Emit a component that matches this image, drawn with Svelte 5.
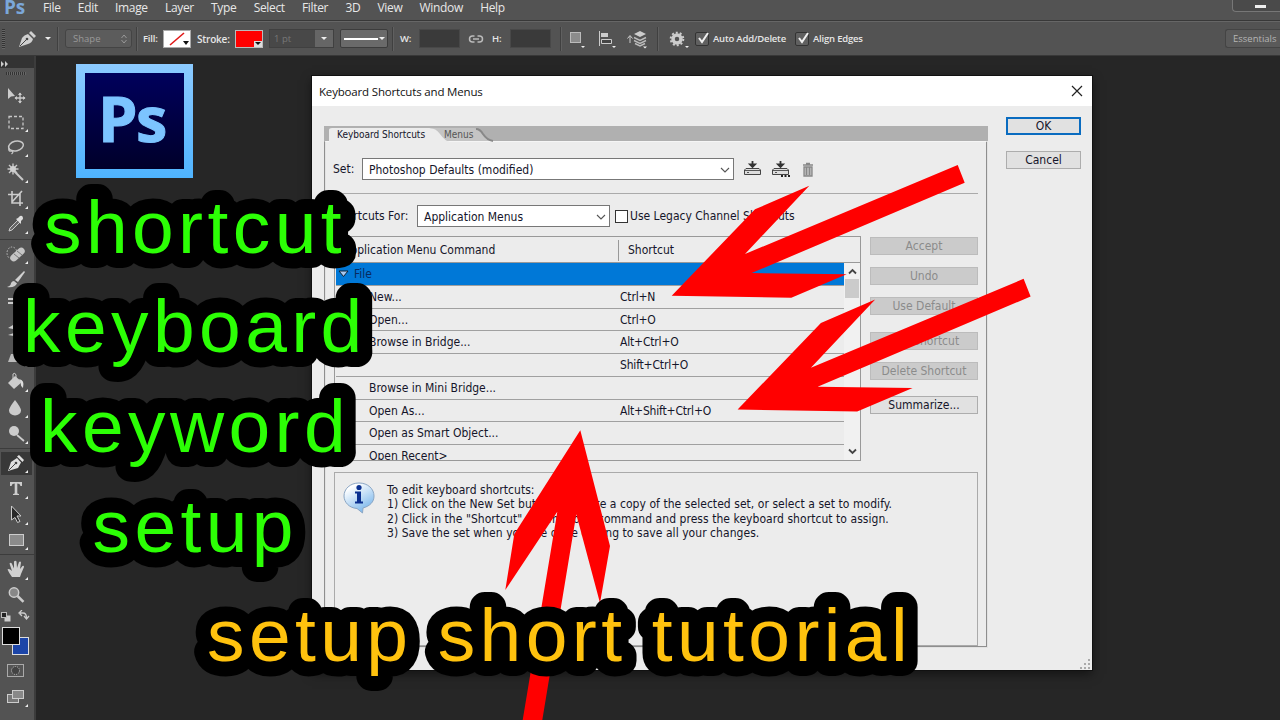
<script lang="ts">
    const menus = ["File", "Edit", "Image", "Layer", "Type", "Select", "Filter", "3D", "View", "Window", "Help"];

    const toolGroups: string[][] = [
        ["move", "marquee", "lasso", "wand", "crop", "eyedropper"],
        ["heal", "brush", "stamp", "history", "eraser", "bucket", "blur", "dodge"],
        ["pen", "type", "select", "shape"],
        ["hand", "zoom"],
    ];

    const noCorner = ["move", "zoom"];

    const rows = [
        { name: "New...", keys: "Ctrl+N" },
        { name: "Open...", keys: "Ctrl+O" },
        { name: "Browse in Bridge...", keys: "Alt+Ctrl+O" },
        { name: "", keys: "Shift+Ctrl+O" },
        { name: "Browse in Mini Bridge...", keys: "" },
        { name: "Open As...", keys: "Alt+Shift+Ctrl+O" },
        { name: "Open as Smart Object...", keys: "" },
        { name: "Open Recent>", keys: "" },
    ];

    const actions = [
        { label: "Accept", disabled: true },
        { label: "Undo", disabled: true },
        { label: "Use Default", disabled: true },
        { label: "Add Shortcut", disabled: true, group: true },
        { label: "Delete Shortcut", disabled: true },
        { label: "Summarize...", disabled: false, group: true },
    ];

    const captions = [
        { text: "shortcut", x: 44, y: 253, color: "#2cff05" },
        { text: "keyboard", x: 23, y: 352, color: "#2cff05" },
        { text: "keyword", x: 40, y: 452, color: "#2cff05" },
        { text: "setup", x: 92.5, y: 552, color: "#2cff05" },
        { text: "setup short tutorial", x: 207, y: 661, color: "#ffc20e" },
    ];

    let legacy = false;
</script>

<main>
    <header class="menubar">
        <span class="brand">Ps</span>
        <nav>
            {#each menus as item}
                <span>{item}</span>
            {/each}
        </nav>
        <span class="minimize"></span>
    </header>

    <section class="options">
        <span class="grip"></span>
        <svg class="pen-icon" width="20" height="20" viewBox="0 0 20 20">
            <path d="M1 18 L4 9 Q6 6 10 5 L15 10 Q14 14 10 15 Z" fill="#d0d0d0" />
            <path d="M11 4 L13 2 L18 7 L16 9 Z" fill="#d0d0d0" />
            <path d="M2 17 L8.500 10.500" stroke="#444" />
            <circle cx="9" cy="10" r="1.300" fill="#444" />
        </svg>
        <i class="caret"></i>
        <span class="sep s1"></span>
        <span class="combo">Shape
            <svg width="6" height="10" viewBox="0 0 6 10"><path d="M.5 4 L3 1 L5.500 4 M.5 6 L3 9 L5.500 6" fill="none" stroke="#999" /></svg>
        </span>
        <span class="sep s2"></span>
        <b class="fill-label">Fill:</b>
        <svg class="swatch" width="28" height="18" viewBox="0 0 28 18">
            <rect x=".5" y=".5" width="27" height="17" fill="#fff" stroke="#aaa" />
            <path d="M7 15 L21 3" stroke="#e01818" stroke-width="1.6" />
            <path d="M20 11 H26 L23 15 Z" fill="#111" />
        </svg>
        <b class="stroke-label">Stroke:</b>
        <svg class="swatch" width="28" height="18" viewBox="0 0 28 18">
            <rect x=".5" y=".5" width="27" height="17" fill="#f00" stroke="#bbb" />
            <path d="M19 17 V11 H27 V17 Z" fill="#ddd" />
            <path d="M20 12 H26 L23 15 Z" fill="#111" />
        </svg>
        <span class="width-field"><span>1 pt</span><em><i class="caret"></i></em></span>
        <span class="line-style"><i class="line"></i><i class="caret"></i></span>
        <span class="sep s3"></span>
        <b class="w-label">W:</b>
        <span class="size-field"></span>
        <svg class="link" width="16" height="10" viewBox="0 0 16 10">
            <path d="M6.500 2 H4.500 A3 3 0 0 0 4.500 8 H6.500 M9.500 2 H11.500 A3 3 0 0 1 11.500 8 H9.500 M5 5 H11" fill="none" stroke="#bbb" stroke-width="1.5" />
        </svg>
        <b class="h-label">H:</b>
        <span class="size-field"></span>
        <span class="sep s4"></span>
        <svg class="path-icons" width="82" height="22" viewBox="0 0 82 22">
            <rect x="1.500" y="4.500" width="10" height="10" fill="#8c8c8c" stroke="#bbb" />
            <path d="M30.500 3 V18" stroke="#ccc" />
            <path d="M32 5 h7 v4 h-7 z" fill="#ccc" />
            <path d="M32.500 11.500 h10 v4 h-10 z" fill="#444" stroke="#ccc" />
            <path d="M61 15 V8 M58.500 10.500 L61 7.500 L63.500 10.500" fill="none" stroke="#ccc" />
            <path d="M71 3 L77 6 L71 9 L65 6 Z" fill="#ccc" />
            <path d="M65 9.500 L71 12.500 L77 9.500 M65 12.500 L71 15.500 L77 12.500 M66 15.500 L71 18 L76 15.500" fill="none" stroke="#bbb" stroke-width="1.400" />
            <path d="M12 18 h4 l-2 2 z M43 18 h4 l-2 2 z M74 18.500 h4 l-2 2 z" fill="#eee" />
        </svg>
        <span class="sep s5"></span>
        <svg class="gear" width="20" height="20" viewBox="0 0 20 20">
            <circle cx="8" cy="10" r="4" fill="none" stroke="#ccc" stroke-width="3.500" />
            <circle cx="8" cy="10" r="6.300" fill="none" stroke="#ccc" stroke-width="2" stroke-dasharray="2 1.958" />
            <path d="M16 17 h4 l-2 2 z" fill="#eee" />
        </svg>
        <span class="check"><svg width="14" height="14" viewBox="0 0 14 14"><path d="M3 6 L6 10 L12 1" fill="none" stroke="#f0f0f0" stroke-width="2" /></svg></span>
        <b class="auto">Auto Add/Delete</b>
        <span class="check second"><svg width="14" height="14" viewBox="0 0 14 14"><path d="M3 6 L6 10 L12 1" fill="none" stroke="#f0f0f0" stroke-width="2" /></svg></span>
        <b class="align">Align Edges</b>
        <span class="essentials">Essentials</span>
    </section>

    <div class="workspace">
        <aside>
            <div class="tools-head">
                <svg width="10" height="6" viewBox="0 0 10 6"><path d="M1 0 L4 3 L1 6 Z M5 0 L8 3 L5 6 Z" fill="#ccc" /></svg>
            </div>
            <div class="tools-grip"></div>
            {#each toolGroups as group}
                <div class="tool-group">
                    {#each group as tool}
                        <svg class="tool" class:active={tool === "pen"} viewBox="0 0 36 25.7">
                            {#if tool === "move"}
                                <path d="M8 5 V16 L11 13.500 L15 13 Z" fill="#ccc" />
                                <path d="M20 10 V20 M15 15 H25" stroke="#ccc" stroke-width="1.300" />
                                <path d="M20 9.500 l2 2.500 h-4z M20 20.500 l2 -2.500 h-4z M14.500 15 l2.500 -2 v4z M25.500 15 l-2.500 -2 v4z" fill="#ccc" />
                            {:else if tool === "marquee"}
                                <rect x="9" y="7.500" width="14" height="12" fill="none" stroke="#c8c8c8" stroke-width="1.300" stroke-dasharray="3 2" />
                            {:else if tool === "lasso"}
                                <ellipse cx="16" cy="12" rx="7.500" ry="4.800" fill="none" stroke="#c8c8c8" stroke-width="1.500" transform="rotate(-14 16 12)" />
                                <path d="M9 14 Q8 18 12 17 Q14 18 11.500 20" fill="none" stroke="#c8c8c8" stroke-width="1.300" />
                            {:else if tool === "wand"}
                                <path d="M13 10 L23 20" stroke="#c8c8c8" stroke-width="2" />
                                <path d="M13 3.500 V14.500 M7.500 9 H18.500 M9 5 L17 13 M17 5 L9 13" stroke="#c8c8c8" stroke-width="1.400" />
                                <circle cx="13" cy="9" r="3" fill="#d0d0d0" />
                            {:else if tool === "crop"}
                                <path d="M12 5 V17 H23 M8 8.500 H20 V20 M22 5 L12 16" fill="none" stroke="#ccc" stroke-width="1.600" />
                            {:else if tool === "eyedropper"}
                                <path d="M9 20 L10 17 L18 9 L20 11 L12 19 Z" fill="#666" stroke="#ccc" />
                                <path d="M16 8 L18 7 L20 5 Q23 4 23 8 L21 10 L21 13 Z" fill="#ddd" />
                            {:else if tool === "heal"}
                                <ellipse cx="12" cy="12" rx="5" ry="6" fill="none" stroke="#bbb" stroke-dasharray="1.500 1.500" />
                                <rect x="9" y="10" width="17" height="7" rx="3.500" fill="#c5c5c5" transform="rotate(-42 17.500 13.500)" />
                                <path d="M14 13 l5 4 M17 10 l5 4" stroke="#777" />
                            {:else if tool === "brush"}
                                <path d="M15 13 L24 4 L25 5 L18 15 Z" fill="#d0d0d0" />
                                <path d="M14 14 L17 16.500 Q15 21 7 20 Q11 19 11 16 Q12 14 14 14" fill="#ccc" />
                            {:else if tool === "stamp"}
                                <path d="M8 7 H20 M8 11 H22" stroke="#ccc" stroke-width="2" />
                            {:else if tool === "history"}
                                <path d="M8 10 L13 7 V11 Z M8 17 L14 15 V18 Z" fill="#ccc" />
                            {:else if tool === "eraser"}
                                <path d="M8 18 L11 10 H22 L18 18 Z" fill="#bbb" />
                            {:else if tool === "bucket"}
                                <path d="M8 14 L15 7 L22 13 L14 20 Z" fill="#ccc" />
                                <path d="M13 12 V5 Q15 3 16 6 V10" fill="none" stroke="#ccc" />
                                <path d="M19 10 Q25 11 23 19 Q20 17 21 13 Z" fill="#ddd" />
                            {:else if tool === "blur"}
                                <path d="M15 5 Q21 12.500 21 15.500 A6 5 0 0 1 9 15.500 Q9 12.500 15 5 Z" fill="#ccc" />
                            {:else if tool === "dodge"}
                                <circle cx="14" cy="10" r="5" fill="#ccc" />
                                <path d="M17 14 L24 20" stroke="#ccc" stroke-width="1.800" />
                            {:else if tool === "pen"}
                                <path d="M8 21 L11 12 L17 8 L21 12.500 L18 18 Z" fill="#e0e0e0" />
                                <path d="M17 6.500 L19 5 L24 10 L22.500 12 Z" fill="#e0e0e0" />
                                <path d="M9 20 L16 13" stroke="#444" />
                                <circle cx="16" cy="13" r="1.300" fill="#444" />
                            {:else if tool === "type"}
                                <path d="M10 6 H22 V10 H20.500 Q20 7.500 17.300 7.500 V17 Q17.300 18 19 18 V19 H13 V18 Q14.700 18 14.700 17 V7.500 Q12 7.500 11.500 10 H10 Z" fill="#ccc" />
                            {:else if tool === "select"}
                                <path d="M11.500 4 L21 14 H17 L20 19.500 L17.500 20.500 L15 15.500 L11.500 18 Z" fill="#292929" stroke="#ccc" />
                            {:else if tool === "shape"}
                                <rect x="9.500" y="7.500" width="14" height="11" fill="#8b8b8b" stroke="#ccc" />
                            {:else if tool === "hand"}
                                <path d="M12 20 Q9 16 7.500 12.500 Q9 11 12 14 L9.500 6.500 Q11 5 12 7 L14 11.500 L14 4.500 Q15.500 3 16.500 4.500 L17 11 L19 5 Q20.500 4 21 5.500 L20 12 L22.500 9 Q24 8.500 24 10 L21 17 L20 20 Z" fill="#d0d0d0" />
                            {:else if tool === "zoom"}
                                <circle cx="14" cy="10.500" r="4.700" fill="#888" stroke="#ccc" stroke-width="1.500" />
                                <path d="M17.500 14 L23.500 20" stroke="#ccc" stroke-width="2.500" />
                            {/if}
                            {#if !noCorner.includes(tool)}
                                <path d="M28 20 V23 H25 Z" fill="#eee" />
                            {/if}
                        </svg>
                    {/each}
                </div>
            {/each}
            <svg class="colors" width="36" height="110" viewBox="0 0 36 110">
                <rect x="4.500" y="5.500" width="6" height="6" fill="#ccc" />
                <rect x="1.500" y="2.500" width="5" height="5" fill="#222" stroke="#bbb" />
                <path d="M20 3 H23 Q26.500 3 26.500 8 M22 0 L19 3 L22 6 M24 6 L26.500 9 L29 6" fill="none" stroke="#ccc" stroke-width="1.300" />
                <rect x="12.500" y="27.500" width="16" height="17" fill="#1c45a8" stroke="#ddd" />
                <rect x="2.500" y="17.500" width="17" height="17" fill="#000" stroke="#ddd" />
                <rect x="7.500" y="54.500" width="16" height="12" fill="#555" stroke="#aaa" />
                <circle cx="15.500" cy="60.500" r="4" fill="#444" stroke="#bbb" stroke-dasharray="1.200 1" />
                <rect x="7.500" y="84.500" width="11" height="8" fill="#777" stroke="#ccc" />
                <rect x="12.500" y="80.500" width="11" height="8" fill="#888" stroke="#ccc" />
                <path d="M28 94 V97 H25 Z" fill="#eee" />
            </svg>
        </aside>
    </div>

    <div class="logo"><span>Ps</span></div>

    <div class="dialog">
        <div class="titlebar">
            <span>Keyboard Shortcuts and Menus</span>
            <svg width="12" height="12" viewBox="0 0 12 12"><path d="M1 1 L11 11 M11 1 L1 11" stroke="#222" stroke-width="1.200" /></svg>
        </div>
        <div class="dialog-body">
            <div class="panel">
                <div class="tabs">
                    <svg width="180" height="16" viewBox="0 0 180 16">
                        <path d="M108 2 H150 Q155 2 158 8 Q162 14 168 15 H120 Z" fill="#c4c4c4" />
                        <path d="M152 3 Q156 3 159 8 Q163 14 169 15" fill="none" stroke="#888" stroke-width="2" />
                        <path d="M5 16 V4 Q5 2 8 2 H105 Q112 2 116 8 Q121 15 126 16 Z" fill="#ececec" />
                    </svg>
                    <span class="tab-active">Keyboard Shortcuts</span>
                    <span class="tab-menus">Menus</span>
                </div>
                <div class="panel-body">
                    <div class="set-row">
                        <label for="set">Set:</label>
                        <div class="select" id="set">
                            <span>Photoshop Defaults (modified)</span>
                            <svg width="10" height="6" viewBox="0 0 10 6"><path d="M1 1 L5 5 L9 1" fill="none" stroke="#555" stroke-width="1.100" /></svg>
                        </div>
                        <svg class="set-icons" width="72" height="18" viewBox="0 0 72 18">
                            <path d="M3 8.500 L1.500 10 V14.500 H17.500 V10 L16 8.500 Z" fill="#ddd" stroke="#444" />
                            <path d="M2 10.500 H17 M4 12.500 H6" stroke="#555" />
                            <path d="M9.500 1 V5 M7 4.500 H12 L9.500 7 Z" fill="#333" stroke="#333" stroke-width="1.800" />
                            <g transform="translate(28 0)">
                                <path d="M3 8.500 L1.500 10 V14.500 H17.500 V10 L16 8.500 Z" fill="#ddd" stroke="#444" />
                                <path d="M2 10.500 H17 M4 12.500 H6" stroke="#555" />
                                <path d="M9.500 1 V5 M7 4.500 H12 L9.500 7 Z" fill="#333" stroke="#333" stroke-width="1.800" />
                                <path d="M10 16 H19" stroke="#222" stroke-width="2" stroke-dasharray="2 1.500" />
                            </g>
                            <path d="M60 5 H70 M63 3.500 H67 M61 7 V16 H69 V7 Z M63.500 7 V15 M66.500 7 V15" fill="#bbb" stroke="#888" stroke-width="1.300" />
                        </svg>
                    </div>
                    <hr />
                    <div class="for-row">
                        <label for="target">Shortcuts For:</label>
                        <div class="select small" id="target">
                            <span>Application Menus</span>
                            <svg width="10" height="6" viewBox="0 0 10 6"><path d="M1 1 L5 5 L9 1" fill="none" stroke="#555" stroke-width="1.100" /></svg>
                        </div>
                        <span class="box" class:on={legacy}></span>
                        <span class="legacy">Use Legacy Channel Shortcuts</span>
                    </div>
                    <div class="middle">
                        <div class="table">
                            <div class="thead">
                                <span class="col-name">Application Menu Command</span>
                                <span class="col-keys">Shortcut</span>
                            </div>
                            <div class="tbody">
                                <div class="rows">
                                    <div class="row file">
                                        <svg width="11" height="8" viewBox="0 0 11 8"><path d="M1 1 H10 L5.500 6.500 Z" fill="#a9c8f0" stroke="#123" /></svg>
                                        <span>File</span>
                                    </div>
                                    {#each rows as row}
                                        <div class="row">
                                            <span class="name">{row.name}</span>
                                            <span class="keys">{row.keys}</span>
                                        </div>
                                    {/each}
                                </div>
                                <div class="scrollbar">
                                    <svg width="9" height="7" viewBox="0 0 9 7"><path d="M1 5.500 L4.500 2 L8 5.500" fill="none" stroke="#444" stroke-width="1.800" /></svg>
                                    <i></i>
                                    <svg width="9" height="7" viewBox="0 0 9 7"><path d="M1 1.500 L4.500 5 L8 1.500" fill="none" stroke="#444" stroke-width="1.800" /></svg>
                                </div>
                            </div>
                        </div>
                        <div class="actions">
                            {#each actions as action}
                                <button class:group={action.group} disabled={action.disabled}>{action.label}</button>
                            {/each}
                        </div>
                    </div>
                    <div class="info">
                        <svg width="34" height="34" viewBox="0 0 34 34">
                            <defs>
                                <linearGradient id="bubble" x1="0" y1="0" x2="0.6" y2="1">
                                    <stop offset="0.2" stop-color="#fff" />
                                    <stop offset="1" stop-color="#7db8ec" />
                                </linearGradient>
                            </defs>
                            <path d="M17 2 C26 2 32 8 32 15 C32 21 28 25 21 27 L20.500 32 L15 27.500 C7 27 2 21 2 15 C2 8 8 2 17 2 Z" fill="url(#bubble)" stroke="#8ba6c4" />
                            <circle cx="17" cy="6.500" r="2.600" fill="#0b3090" />
                            <path d="M13 10.500 H19 V20.500 H21 V22.500 H13 V20.500 H15 V12.500 H13 Z" fill="#0b3090" />
                        </svg>
                        <div class="lines">
                            <p>To edit keyboard shortcuts:</p>
                            <p>1) Click on the New Set button to create a copy of the selected set, or select a set to modify.</p>
                            <p>2) Click in the "Shortcut" column for a command and press the keyboard shortcut to assign.</p>
                            <p>3) Save the set when you are done editing to save all your changes.</p>
                        </div>
                    </div>
                </div>
            </div>
            <div class="confirm">
                <button class="ok">OK</button>
                <button>Cancel</button>
            </div>
        </div>
        <svg class="resize" width="12" height="12" viewBox="0 0 12 12">
            <path d="M9 1h2v2h-2z M9 5h2v2h-2z M5 5h2v2h-2z M9 9h2v2h-2z M5 9h2v2h-2z M1 9h2v2h-2z" fill="#aaa" />
        </svg>
    </div>

    <svg class="overlay" width="1280" height="720" viewBox="0 0 1280 720">
        <g fill="#f00">
            <path d="M671.700 295.700 L755 209.300 L809.300 185.700 L745 254 L957.700 165 L964.700 182.700 L751.700 273 L846.700 274.300 L791.300 297.700 Z" />
            <path transform="translate(65.900 113.800)" d="M671.700 295.700 L755 209.300 L809.300 185.700 L745 254 L957.700 165 L964.700 182.700 L751.700 273 L846.700 274.300 L791.300 297.700 Z" />
            <path d="M580.300 430.300 L514.300 534 L505.300 590 L557.300 511.700 L522.700 720 L542.300 720 L576.300 514.300 L600 603 L610 546 Z" />
        </g>
        {#each captions as caption}
            <text x={caption.x} y={caption.y} fill={caption.color}>{caption.text}</text>
        {/each}
    </svg>
</main>

<style>
    main {
        position: relative;
        display: flex;
        flex-direction: column;
        width: 1280px;
        height: 720px;
        overflow: hidden;
        background: #262626;
        font-family: "Open Sans", sans-serif;
    }

    .menubar {
        display: flex;
        height: 21px;
        background: #535353;
        border-bottom: 1px solid #383838;
        box-sizing: border-box;
        color: #e8e8e8;
    }

    .brand {
        width: 37px;
        padding-left: 4px;
        font: bold 19px/14px "Open Sans", sans-serif;
        color: #7ba7d9;
        box-sizing: border-box;
        letter-spacing: -0.300px;
    }

    nav {
        display: flex;
        gap: 17.200px;
        flex: 1;
        padding-left: 6px;
        font-size: 12px;
        letter-spacing: -0.330px;
        line-height: 16px;
    }

    .minimize {
        width: 48px;
        height: 12px;
        border: 1px solid #777;
        border-width: 0 0 1px 1px;
        border-radius: 0 0 0 4px;
        background: linear-gradient(#eee, #eee) 22px 5px / 11px 3px no-repeat #4a4a4a;
        box-sizing: border-box;
    }

    .options {
        display: flex;
        align-items: center;
        height: 35px;
        background: #535353;
        border-top: 1px solid #666;
        border-bottom: 1px solid #383838;
        box-sizing: border-box;
        color: #e6e6e6;
        font-size: 9.5px;
        white-space: nowrap;
    }

    .options > * {
        flex: none;
        box-sizing: border-box;
    }

    .options b {
        font-weight: 600;
        letter-spacing: -0.200px;
    }

    .grip {
        width: 3px;
        height: 20px;
        margin-left: 2px;
        background: repeating-linear-gradient(#333 0 1px, #666 1px 2px);
    }

    .pen-icon {
        margin-left: 13px;
    }

    .caret {
        width: 0;
        height: 0;
        border: 3px solid transparent;
        border-top: 3px solid #eee;
        border-bottom: 0;
    }

    .options > .caret {
        margin-left: 7px;
    }

    .sep {
        width: 2px;
        height: 24px;
        background: #404040;
        border-right: 1px solid #606060;
    }

    .s1 {
        margin-left: 6px;
    }

    .combo {
        display: flex;
        justify-content: space-between;
        align-items: center;
        width: 67px;
        height: 19px;
        margin-left: 6px;
        padding: 0 4px 0 7px;
        border: 1px solid #444;
        border-radius: 3px;
        background: #5c5c5c;
        color: #999;
    }

    .s2 {
        margin-left: 4px;
    }

    .fill-label {
        width: 20px;
        margin-left: 5px;
    }

    .stroke-label {
        width: 38px;
        margin-left: 6px;
        font-size: 10px;
    }

    .width-field {
        display: flex;
        width: 65px;
        height: 19px;
        margin-left: 6px;
        border: 1px solid #404040;
        background: #484848;
        color: #777;
        line-height: 17px;
    }

    .width-field span {
        flex: 1;
        padding-left: 4px;
    }

    .width-field em {
        display: flex;
        align-items: center;
        justify-content: center;
        width: 18px;
        background: #666;
    }

    .line-style {
        display: flex;
        align-items: center;
        gap: 1px;
        width: 48px;
        height: 19px;
        margin-left: 6px;
        padding-left: 3px;
        border: 1px solid #3c3c3c;
        border-radius: 2px;
        background: #6a6a6a;
    }

    .line {
        width: 34px;
        height: 2px;
        background: #fff;
    }

    .s3 {
        margin-left: 4px;
    }

    .w-label {
        width: 19px;
        margin-left: 6px;
    }

    .size-field {
        width: 41px;
        height: 19px;
        background: #3a3a3a;
        border: 1px solid #484848;
    }

    .link {
        margin-left: 8px;
    }

    .h-label {
        width: 18px;
        margin-left: 8px;
    }

    .s4 {
        margin-left: 9px;
    }

    .path-icons {
        margin-left: 7px;
    }

    .s5 {
        margin-left: 6px;
    }

    .gear {
        margin-left: 10px;
    }

    .check {
        width: 14px;
        height: 14px;
        margin-left: 6px;
        border: 1px solid #333;
        border-radius: 2px;
        background: #606060;
    }

    .check svg {
        display: block;
        margin-top: -1px;
    }

    .auto {
        width: 82px;
        margin-left: 4px;
    }

    .check.second {
        margin-left: 0;
    }

    .align {
        margin-left: 4px;
    }

    .essentials {
        width: 55px;
        height: 19px;
        margin-left: auto;
        padding-left: 7px;
        border: 1px solid #444;
        border-right: 0;
        border-radius: 3px 0 0 3px;
        background: #5a5a5a;
        color: #b5b5b5;
        line-height: 17px;
    }

    .workspace {
        display: flex;
        flex: 1;
    }

    aside {
        display: flex;
        flex-direction: column;
        width: 36px;
        height: 664px;
        background: #535353;
        border-right: 2px solid #3c3c3c;
        box-sizing: border-box;
    }

    .tools-head {
        flex: none;
        height: 12px;
        background: #333;
        line-height: 10px;
    }

    .tools-grip {
        flex: none;
        width: 20px;
        height: 3px;
        margin: 4px 0 8px 6px;
        background: repeating-linear-gradient(90deg, #333 0 1px, #666 1px 2px);
    }

    .tool-group {
        display: flex;
        flex-direction: column;
        padding-bottom: 1.500px;
        margin-bottom: 1.300px;
        border-bottom: 1px solid #3c3c3c;
    }

    .tool-group:nth-of-type(6) {
        border: 0;
        margin: 0;
    }

    .tool {
        display: block;
        width: 36px;
        height: 25.700px;
    }

    .tool.active {
        background: linear-gradient(#383838, #383838) 1px 2px / 31px 23px no-repeat;
    }

    .colors {
        flex: none;
        display: block;
    }

    .logo {
        position: absolute;
        left: 76px;
        top: 64px;
        width: 117px;
        height: 114px;
        border: 9px solid #6cbcff;
        border-image: linear-gradient(#8ccaff, #4fb4ff) 9;
        background: linear-gradient(#00005c, #00002a);
        box-sizing: border-box;
        color: #7cc4ff;
        font: 700 63px/89px "Open Sans", sans-serif;
    }

    .logo span {
        display: block;
        padding-left: 13px;
        letter-spacing: -1.500px;
        -webkit-text-stroke: 1px #7cc4ff;
    }

    .dialog {
        position: absolute;
        left: 312px;
        top: 76px;
        width: 780px;
        height: 594px;
        background: #ececec;
        box-shadow: 0 0 0 1px #111, 0 4px 10px rgba(0, 0, 0, 0.5);
        color: #15152a;
        font-family: "DejaVu Sans Condensed", "DejaVu Sans", sans-serif;
        font-stretch: condensed;
        font-size: 12px;
        white-space: nowrap;
    }

    .titlebar {
        display: flex;
        justify-content: space-between;
        align-items: center;
        height: 30px;
        padding: 0 9px 0 7px;
        background: #fff;
        box-sizing: border-box;
        color: #111;
        font-family: "Open Sans", sans-serif;
        font-stretch: normal;
        font-size: 11.500px;
        letter-spacing: -0.170px;
    }

    .dialog-body {
        display: flex;
        gap: 18px;
        padding: 11px 0 0 12px;
    }

    .panel {
        width: 664px;
        margin-top: 9px;
    }

    .tabs {
        position: relative;
        height: 15px;
        background: #b0b0b0;
        font-size: 10px;
    }

    .tabs svg {
        display: block;
    }

    .tabs span {
        position: absolute;
        top: 2px;
        line-height: 13px;
    }

    .tab-active {
        left: 13px;
    }

    .tab-menus {
        left: 120px;
        color: #555;
    }

    .panel-body {
        height: 507px;
        padding: 16px 8px 0;
        border: 2px groove #e2e2e2;
        border-top: 1px solid #f5f5f5;
        box-sizing: border-box;
    }

    .set-row,
    .for-row {
        display: flex;
        align-items: center;
        height: 22px;
    }

    .set-row label {
        width: 28px;
    }

    label {
        margin-left: -1px;
        padding-right: 1px;
    }

    .select {
        display: flex;
        justify-content: space-between;
        align-items: center;
        width: 372px;
        height: 22px;
        padding: 1px 3px 0 6px;
        border: 1px solid #777;
        background: #fff;
        box-sizing: border-box;
    }

    .set-icons {
        margin-left: 9px;
    }

    hr {
        height: 1px;
        margin: 13px 0 11px;
        border: 0;
        background: #aaa;
    }

    .for-row label {
        width: 83px;
    }

    .select.small {
        width: 193px;
    }

    .box {
        width: 13px;
        height: 13px;
        margin: 0 2px 0 5px;
        border: 1px solid #333;
        background: #fff;
        box-sizing: border-box;
    }

    .middle {
        display: flex;
        gap: 9px;
        margin-top: 9px;
    }

    .table {
        width: 527px;
        height: 225px;
        border: 1px solid #999;
        box-sizing: border-box;
    }

    .thead {
        display: flex;
        align-items: center;
        height: 26px;
        padding-top: 1px;
        border-bottom: 1px solid #999;
        box-sizing: border-box;
    }

    .col-name {
        width: 284px;
        padding-left: 8px;
        border-right: 1px solid #999;
        line-height: 21px;
        box-sizing: border-box;
    }

    .col-keys {
        padding-left: 9px;
        line-height: 21px;
    }

    .tbody {
        display: flex;
        height: 197px;
    }

    .rows {
        width: 509px;
        padding-left: 1px;
        overflow: hidden;
        box-sizing: border-box;
    }

    .row {
        display: flex;
        height: 22.750px;
        padding-left: 33px;
        border-bottom: 1px solid #a0a0a0;
        box-sizing: border-box;
        line-height: 22px;
    }

    .row.file {
        align-items: center;
        gap: 5px;
        padding-left: 2px;
        background: #0078d7;
        color: #082a60;
    }

    .name {
        width: 251px;
    }

    .keys {
        letter-spacing: -0.180px;
    }

    .scrollbar {
        display: flex;
        flex-direction: column;
        align-items: center;
        width: 16px;
        padding: 5px 0 5px;
        background: #f1f1f1;
        box-sizing: border-box;
    }

    .scrollbar i {
        width: 14px;
        height: 19px;
        margin: 4px 0 auto;
        background: #cbcbcb;
    }

    .actions {
        display: flex;
        flex-direction: column;
        gap: 12px;
        width: 108px;
        padding-top: 1px;
    }

    button {
        height: 18px;
        padding: 1px 0 0;
        border: 1px solid #adadad;
        background: #e1e1e1;
        color: #15152a;
        font: inherit;
        line-height: 15px;
    }

    button:disabled {
        background: #cbcbcb;
        border-color: #bcbcbc;
        color: #8b8b8b;
    }

    button.group {
        margin-top: 4.500px;
    }

    .info {
        display: flex;
        height: 174px;
        margin-top: 11px;
        padding: 8px 0 0 7px;
        border: 1px solid #aaa;
        box-sizing: border-box;
        font-size: 12px;
    }

    .lines {
        padding: 2px 0 0 11px;
        letter-spacing: 0.050px;
    }

    .lines p {
        margin: 0;
        line-height: 14.300px;
    }

    .confirm {
        display: flex;
        flex-direction: column;
        gap: 16px;
        width: 75px;
    }

    .confirm .ok {
        border: 2px solid #0a6cc0;
        line-height: 13px;
    }

    .resize {
        position: absolute;
        right: 1px;
        bottom: 0;
    }

    .overlay {
        position: absolute;
        left: 0;
        top: 0;
    }

    .overlay text {
        font: 75px "Liberation Sans", Arial, sans-serif;
        letter-spacing: 4.400px;
        stroke: #000;
        stroke-width: 30px;
        stroke-linejoin: round;
        paint-order: stroke;
    }
</style>
